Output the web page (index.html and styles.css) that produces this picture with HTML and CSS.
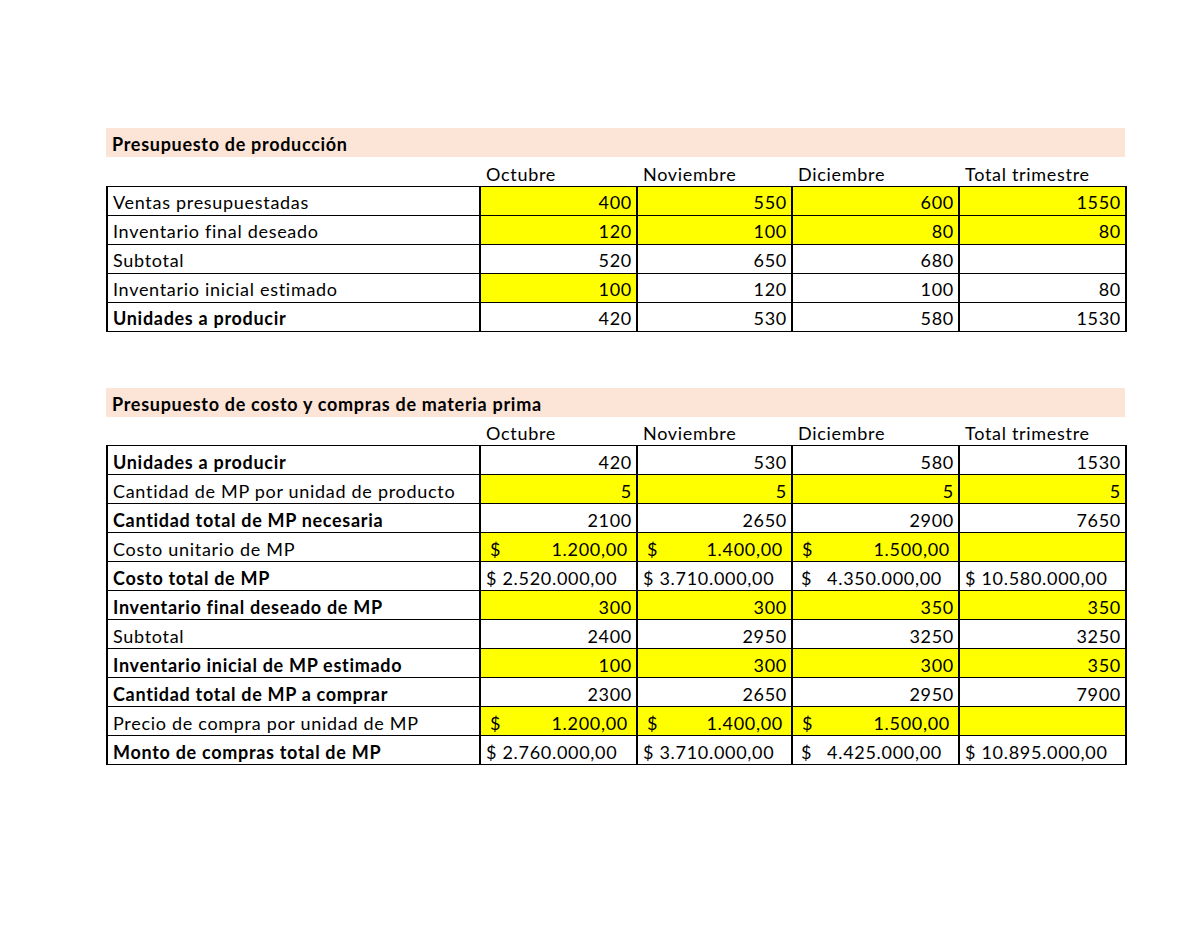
FILE: index.html
```html
<!DOCTYPE html>
<html lang="es">
  <head>
    <meta charset="UTF-8" />
    <meta name="viewport" content="width=device-width, initial-scale=1.0" />
    <title>Presupuestos</title>
    <link rel="stylesheet" href="styles.css">
  </head>
  <body>
    <main class="page">
      <section class="budget">
        <div class="band">Presupuesto de producción</div>
        <table class="sheet">
          <colgroup>
            <col class="c-label"><col class="c-oct"><col class="c-nov"><col class="c-dic"><col class="c-tot">
          </colgroup>
          <thead>
            <tr class="months">
              <th></th><th>Octubre</th><th>Noviembre</th><th>Diciembre</th><th>Total trimestre</th>
            </tr>
          </thead>
          <tbody>
            <tr>
              <td class="label">Ventas presupuestadas</td>
              <td class="num hl">400</td><td class="num hl">550</td><td class="num hl">600</td><td class="num hl">1550</td>
            </tr>
            <tr>
              <td class="label">Inventario final deseado</td>
              <td class="num hl">120</td><td class="num hl">100</td><td class="num hl">80</td><td class="num hl">80</td>
            </tr>
            <tr>
              <td class="label">Subtotal</td>
              <td class="num">520</td><td class="num">650</td><td class="num">680</td><td class="num"></td>
            </tr>
            <tr>
              <td class="label">Inventario inicial estimado</td>
              <td class="num hl">100</td><td class="num">120</td><td class="num">100</td><td class="num">80</td>
            </tr>
            <tr>
              <td class="label bold">Unidades a producir</td>
              <td class="num">420</td><td class="num">530</td><td class="num">580</td><td class="num">1530</td>
            </tr>
          </tbody>
        </table>
      </section>

      <section class="budget">
        <div class="band">Presupuesto de costo y compras de materia prima</div>
        <table class="sheet">
          <colgroup>
            <col class="c-label"><col class="c-oct"><col class="c-nov"><col class="c-dic"><col class="c-tot">
          </colgroup>
          <thead>
            <tr class="months">
              <th></th><th>Octubre</th><th>Noviembre</th><th>Diciembre</th><th>Total trimestre</th>
            </tr>
          </thead>
          <tbody>
            <tr>
              <td class="label bold">Unidades a producir</td>
              <td class="num">420</td><td class="num">530</td><td class="num">580</td><td class="num">1530</td>
            </tr>
            <tr>
              <td class="label">Cantidad de MP por unidad de producto</td>
              <td class="num hl">5</td><td class="num hl">5</td><td class="num hl">5</td><td class="num hl">5</td>
            </tr>
            <tr>
              <td class="label bold">Cantidad total de MP necesaria</td>
              <td class="num">2100</td><td class="num">2650</td><td class="num">2900</td><td class="num">7650</td>
            </tr>
            <tr>
              <td class="label">Costo unitario de MP</td>
              <td class="money hl"><span>$</span><span>1.200,00</span></td>
              <td class="money hl"><span>$</span><span>1.400,00</span></td>
              <td class="money hl"><span>$</span><span>1.500,00</span></td>
              <td class="hl"></td>
            </tr>
            <tr>
              <td class="label bold">Costo total de MP</td>
              <td class="total">$ 2.520.000,00</td>
              <td class="total">$ 3.710.000,00</td>
              <td class="money wide"><span>$</span><span>4.350.000,00</span></td>
              <td class="total">$ 10.580.000,00</td>
            </tr>
            <tr>
              <td class="label bold">Inventario final deseado de MP</td>
              <td class="num hl">300</td><td class="num hl">300</td><td class="num hl">350</td><td class="num hl">350</td>
            </tr>
            <tr>
              <td class="label">Subtotal</td>
              <td class="num">2400</td><td class="num">2950</td><td class="num">3250</td><td class="num">3250</td>
            </tr>
            <tr>
              <td class="label bold">Inventario inicial de MP estimado</td>
              <td class="num hl">100</td><td class="num hl">300</td><td class="num hl">300</td><td class="num hl">350</td>
            </tr>
            <tr>
              <td class="label bold">Cantidad total de MP a comprar</td>
              <td class="num">2300</td><td class="num">2650</td><td class="num">2950</td><td class="num">7900</td>
            </tr>
            <tr>
              <td class="label">Precio de compra por unidad de MP</td>
              <td class="money hl"><span>$</span><span>1.200,00</span></td>
              <td class="money hl"><span>$</span><span>1.400,00</span></td>
              <td class="money hl"><span>$</span><span>1.500,00</span></td>
              <td class="hl"></td>
            </tr>
            <tr>
              <td class="label bold">Monto de compras total de MP</td>
              <td class="total">$ 2.760.000,00</td>
              <td class="total">$ 3.710.000,00</td>
              <td class="money wide"><span>$</span><span>4.425.000,00</span></td>
              <td class="total">$ 10.895.000,00</td>
            </tr>
          </tbody>
        </table>
      </section>
    </main>
  </body>
</html>
```

FILE: styles.css
```css
*{
    margin: 0;
    padding: 0;
    box-sizing: border-box;
}
body{
    background: #ffffff;
    color: #000000;
    font-family: Lato, "Open Sans", sans-serif;
    font-size: 18px;
    letter-spacing: 0.7px;
}
.page{
    padding: 128px 0 0 106px;
    display: flex;
    flex-direction: column;
    gap: 56px;
}
.budget{
    width: 1019px;
}
.band{
    background-color: #fce4d6;
    height: 29px;
    line-height: 33px;
    padding-left: 6px;
    font-weight: bold;
}
.sheet{
    width: 1019px;
    border-collapse: collapse;
    table-layout: fixed;
}
.c-label{ width: 373px; }
.c-oct{ width: 157px; }
.c-nov{ width: 155px; }
.c-dic{ width: 167px; }
.c-tot{ width: 167px; }
.months th{
    height: 29px;
    text-align: left;
    font-weight: normal;
    padding-left: 6px;
    padding-top: 5px;
    border: none;
}
.sheet td{
    height: 29px;
    border-top: 1px solid #000;
    border-bottom: 1px solid #000;
    border-left: 2px solid #000;
    border-right: 2px solid #000;
    padding: 3px 4px 0 5px;
    white-space: nowrap;
}
.label{
    padding-left: 6px;
}
.bold{
    font-weight: bold;
}
.num{
    text-align: right;
}
.hl{
    background-color: #ffff00;
}
.money span:first-child{
    float: left;
    padding-left: 4px;
}
.money span:last-child{
    float: right;
    padding-right: 4px;
}
.money.wide span:first-child{
    padding-left: 3px;
}
.money.wide span:last-child{
    padding-right: 12px;
}
.total{
    padding-left: 5px;
}
```
